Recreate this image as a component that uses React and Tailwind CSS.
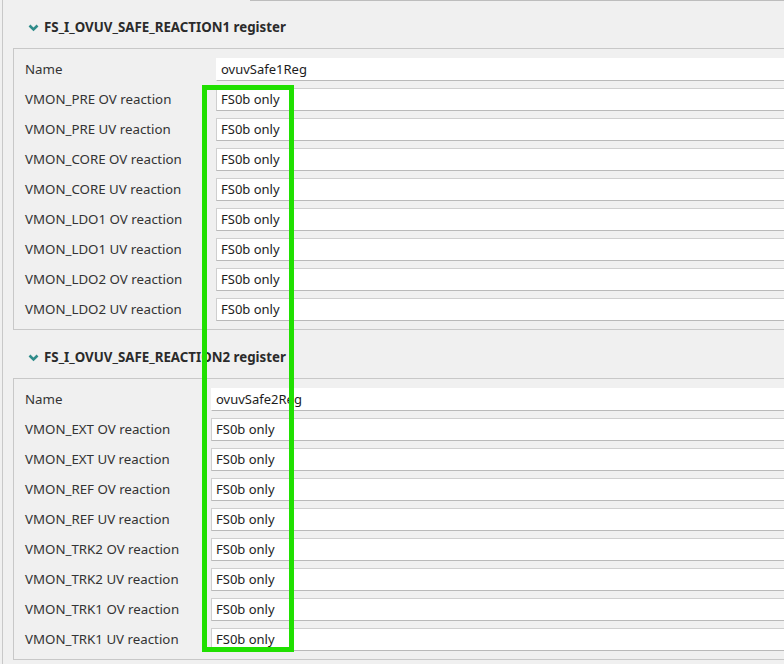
import React from "react";

const sec1 = {
  title: "FS_I_OVUV_SAFE_REACTION1 register",
  name: "ovuvSafe1Reg",
  labelW: "w-[191px]",
  rows: [
    "VMON_PRE OV reaction",
    "VMON_PRE UV reaction",
    "VMON_CORE OV reaction",
    "VMON_CORE UV reaction",
    "VMON_LDO1 OV reaction",
    "VMON_LDO1 UV reaction",
    "VMON_LDO2 OV reaction",
    "VMON_LDO2 UV reaction",
  ],
};
const sec2 = {
  title: "FS_I_OVUV_SAFE_REACTION2 register",
  name: "ovuvSafe2Reg",
  labelW: "w-[186px]",
  rows: [
    "VMON_EXT OV reaction",
    "VMON_EXT UV reaction",
    "VMON_REF OV reaction",
    "VMON_REF UV reaction",
    "VMON_TRK2 OV reaction",
    "VMON_TRK2 UV reaction",
    "VMON_TRK1 OV reaction",
    "VMON_TRK1 UV reaction",
  ],
};

function Chevron() {
  return (
    <svg width="11" height="8" viewBox="0 0 11 8" className="shrink-0">
      <polyline points="1.5,1.5 5.5,5.5 9.5,1.5" fill="none" stroke="#2f8c8a" strokeWidth="2.6" />
    </svg>
  );
}

function Row({ label, value, labelW, isName }) {
  return (
    <div className="flex items-center h-[23px]">
      <div className={`${labelW} shrink-0 text-[13.3px] text-[#333] pt-[1px]`}>{label}</div>
      <div
        className={`flex-1 h-[23px] bg-white border ${isName ? "border-transparent border-b-[#b9b9b9]" : "border-[#cfcfcf] border-b-[#b9b9b9]"} flex items-center pl-[4px] pt-[1px] text-[13px] text-[#1c1c1c]`}
      >
        {value}
      </div>
    </div>
  );
}

function Section({ sec }) {
  return (
    <div>
      <div className="h-[48px] flex items-center pt-[7px] pl-[25px] gap-[5px]">
        <Chevron />
        <span className="font-bold text-[13.3px] text-[#2b2b2b]">{sec.title}</span>
      </div>
      <div className="ml-[10px] mr-[-20px] border border-[#c8c8c8] pl-[11px] pt-[9px] pb-[8px] flex flex-col gap-[7px]">
        <Row label="Name" value={sec.name} labelW={sec.labelW} isName />
        {sec.rows.map((r) => (
          <Row key={r} label={r} value="FS0b only" labelW={sec.labelW} />
        ))}
      </div>
    </div>
  );
}

export default function App() {
  return (
    <div
      className="relative w-[784px] h-[664px] overflow-hidden bg-[#f0f0f0]"
      style={{ fontFamily: '"Noto Sans", "Open Sans", sans-serif' }}
    >
      <div className="absolute left-[250px] right-0 top-0 h-[1px] bg-[#bdbdbd]" />
      <div className="ml-[2px] border-l border-[#c8c8c8] h-full">
        <Section sec={sec1} />
        <Section sec={sec2} />
      </div>
      <div className="absolute left-[202px] top-[85px] w-[92px] h-[567px] border-[5px] border-[#20e000]" />
    </div>
  );
}
